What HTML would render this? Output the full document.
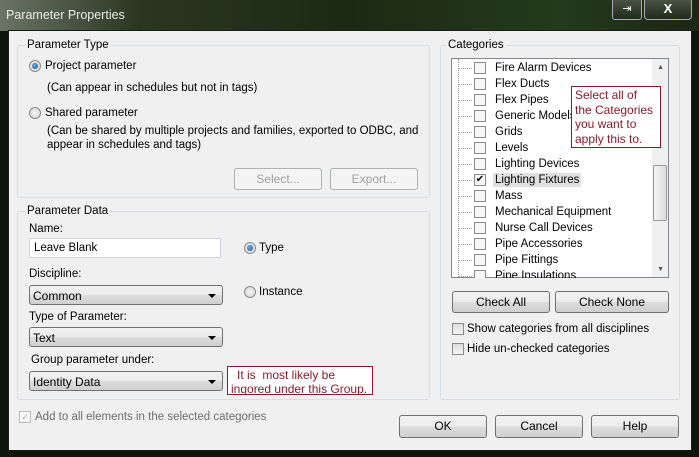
<!DOCTYPE html>
<html><head><style>
*{margin:0;padding:0;box-sizing:border-box}
body{width:699px;height:457px;overflow:hidden;background:#0d140a;font-family:"Liberation Sans",sans-serif;font-size:11.5px;color:#000;position:relative}
.a{position:absolute;white-space:nowrap;line-height:17px}
.title{background:linear-gradient(90deg,#6a7464 0%,#2a3622 20%,#1c2a14 50%,#243a1a 80%,#1b2614 100%);left:0;top:0;width:699px;height:31px}
.content{left:8px;top:30px;width:684px;height:421px;background:#f0f0f0;border:1px solid #1a1a1a}
.grp{position:absolute;border:1px solid #d5dfe5;border-radius:3px}
.leg{position:absolute;background:#f0f0f0;padding:0 2px}
.btn{position:absolute;border:1px solid #707070;border-radius:3px;background:linear-gradient(#f2f2f2 0%,#ebebeb 50%,#dddddd 51%,#cfcfcf 100%);text-align:center;font-size:12px}
.btn.dis{border-color:#adb2b5;background:#f4f4f4;color:#a0a0a0}
.sel{position:absolute;border:1px solid #707070;border-radius:3px;background:linear-gradient(#f2f2f2 0%,#ebebeb 50%,#dddddd 51%,#cfcfcf 100%);padding-left:3px;line-height:20px;font-size:12px}
.sel:after{content:"";position:absolute;right:6px;top:8px;border-left:4px solid transparent;border-right:4px solid transparent;border-top:4px solid #000}
.rad{position:absolute;width:12px;height:12px;border-radius:50%;border:1px solid #8a8a8a;background:radial-gradient(#f4f4f4,#d4d4d4)}
.rad.on:after{content:"";position:absolute;left:2px;top:2px;width:6px;height:6px;border-radius:50%;background:radial-gradient(circle at 40% 40%,#6ab3e8,#0e4a85)}
.cb{position:absolute;width:12px;height:12px;border:1px solid #8a8a8a;background:#f7f7f7}
.note{position:absolute;border:1px solid #8b1a2a;background:#fff;color:#8b1a2a;font-size:12px;line-height:14px;padding:1px 3px;white-space:nowrap;overflow:hidden}
.li{position:relative;height:16px}
.li .d{position:absolute;left:7px;top:8px;width:14px;border-top:1px dotted #999}
.li .cb{left:23px;top:2px}
.li .t{position:absolute;left:44px;top:1px}
</style></head><body>
<div class="a title"></div>
<div class="a" style="left:6px;top:7px;color:#e8ece4;font-size:12.5px">Parameter Properties</div>
<div class="a" style="left:612px;top:0;width:30px;height:20px;border:1px solid #aab;border-top:none;border-radius:0 0 3px 3px;background:linear-gradient(#4a5446,#1e2a1a);color:#fff;text-align:center;font-size:11px;line-height:18px">⇥</div>
<div class="a" style="left:644px;top:0;width:48px;height:20px;border:1px solid #aab;border-top:none;border-radius:0 0 4px 4px;background:linear-gradient(#4a5446,#1e2a1a);color:#fff;text-align:center;font-weight:bold;font-size:13px;line-height:18px">X</div>
<div class="a content"></div>

<div class="grp" style="left:17px;top:45px;width:413px;height:153px"></div>
<div class="leg a" style="left:25px;top:37px">Parameter Type</div>
<div class="rad on" style="left:29px;top:60px"></div>
<div class="a" style="left:45px;top:58px">Project parameter</div>
<div class="a" style="left:47px;top:80px">(Can appear in schedules but not in tags)</div>
<div class="rad" style="left:29px;top:107px"></div>
<div class="a" style="left:45px;top:105px">Shared parameter</div>
<div class="a" style="left:47px;top:123px">(Can be shared by multiple projects and families, exported to ODBC, and</div>
<div class="a" style="left:47px;top:137px">appear in schedules and tags)</div>
<div class="btn dis" style="left:234px;top:168px;width:88px;height:22px;line-height:20px">Select...</div>
<div class="btn dis" style="left:330px;top:168px;width:88px;height:22px;line-height:20px">Export...</div>

<div class="grp" style="left:17px;top:211px;width:413px;height:189px"></div>
<div class="leg a" style="left:25px;top:203px">Parameter Data</div>
<div class="a" style="left:29px;top:221px">Name:</div>
<div class="a" style="left:29px;top:238px;width:192px;height:20px;background:#fff;border:1px solid #d0d6dc;padding:0 4px;line-height:18px">Leave Blank</div>
<div class="rad on" style="left:244px;top:242px"></div>
<div class="a" style="left:259px;top:240px">Type</div>
<div class="a" style="left:29px;top:266px">Discipline:</div>
<div class="sel" style="left:29px;top:285px;width:194px;height:20px">Common</div>
<div class="rad" style="left:244px;top:286px"></div>
<div class="a" style="left:259px;top:284px">Instance</div>
<div class="a" style="left:29px;top:309px">Type of Parameter:</div>
<div class="sel" style="left:29px;top:327px;width:194px;height:20px">Text</div>
<div class="a" style="left:31px;top:352px">Group parameter under:</div>
<div class="sel" style="left:29px;top:371px;width:194px;height:20px">Identity Data</div>
<div class="note" style="left:227px;top:366px;width:146px;height:29px"><span style="padding-left:6px">It is&nbsp; most likely be</span><br>ingored under this Group.</div>
<div class="cb" style="left:19px;top:411px;border-color:#bbb;color:#aaa;font-size:9px;line-height:10px;text-align:center">✓</div>
<div class="a" style="left:35px;top:409px;color:#6d6d6d">Add to all elements in the selected categories</div>

<div class="grp" style="left:440px;top:45px;width:240px;height:355px"></div>
<div class="leg a" style="left:446px;top:37px">Categories</div>
<div class="a" style="left:451px;top:58px;width:218px;height:220px;background:#fff;border:1px solid #828790;overflow:hidden">
<div style="position:absolute;left:6px;top:0;height:220px;border-left:1px dotted #999"></div>
<div style="position:absolute;right:0;top:0;width:16px;height:218px;background:#f0f0f0"></div>
<div style="position:absolute;right:1px;top:106px;width:14px;height:56px;border:1px solid #999;border-radius:2px;background:linear-gradient(90deg,#f4f4f4,#dcdcdc)"></div>
<div style="position:absolute;right:4px;top:0;font-size:7px;color:#555">▲</div>
<div style="position:absolute;right:4px;top:202px;font-size:7px;color:#555">▼</div>
</div>
<div class="a" style="left:451px;top:60px;width:200px;line-height:14px">
<div class="li"><span class="d"></span><span class="cb"></span><span class="t">Fire Alarm Devices</span></div>
<div class="li"><span class="d"></span><span class="cb"></span><span class="t">Flex Ducts</span></div>
<div class="li"><span class="d"></span><span class="cb"></span><span class="t">Flex Pipes</span></div>
<div class="li"><span class="d"></span><span class="cb"></span><span class="t">Generic Models</span></div>
<div class="li"><span class="d"></span><span class="cb"></span><span class="t">Grids</span></div>
<div class="li"><span class="d"></span><span class="cb"></span><span class="t">Levels</span></div>
<div class="li"><span class="d"></span><span class="cb"></span><span class="t">Lighting Devices</span></div>
<div class="li"><span class="d"></span><span class="cb" style="font-size:10px;line-height:10px;text-align:center">✔</span><span class="t" style="left:42px;padding:0 2px;background:#e0e0e0">Lighting Fixtures</span></div>
<div class="li"><span class="d"></span><span class="cb"></span><span class="t">Mass</span></div>
<div class="li"><span class="d"></span><span class="cb"></span><span class="t">Mechanical Equipment</span></div>
<div class="li"><span class="d"></span><span class="cb"></span><span class="t">Nurse Call Devices</span></div>
<div class="li"><span class="d"></span><span class="cb"></span><span class="t">Pipe Accessories</span></div>
<div class="li"><span class="d"></span><span class="cb"></span><span class="t">Pipe Fittings</span></div>
<div class="li" style="height:10px;overflow:hidden"><span class="d"></span><span class="cb"></span><span class="t">Pipe Insulations</span></div>
</div>
<div class="note" style="left:571px;top:86px;width:90px;height:62px;line-height:14.5px;padding:1px 3px">Select all of<br>the Categories<br>you want to<br>apply this to.</div>
<div class="btn" style="left:452px;top:291px;width:98px;height:22px;line-height:20px">Check All</div>
<div class="btn" style="left:555px;top:291px;width:114px;height:22px;line-height:20px">Check None</div>
<div class="cb" style="left:452px;top:323px;background:linear-gradient(#ddd,#f6f6f6)"></div>
<div class="a" style="left:467px;top:321px">Show categories from all disciplines</div>
<div class="cb" style="left:452px;top:343px;background:linear-gradient(#ddd,#f6f6f6)"></div>
<div class="a" style="left:467px;top:341px">Hide un-checked categories</div>

<div class="btn" style="left:399px;top:415px;width:88px;height:23px;line-height:21px">OK</div>
<div class="btn" style="left:495px;top:415px;width:88px;height:23px;line-height:21px">Cancel</div>
<div class="btn" style="left:591px;top:415px;width:88px;height:23px;line-height:21px">Help</div>
</body></html>
